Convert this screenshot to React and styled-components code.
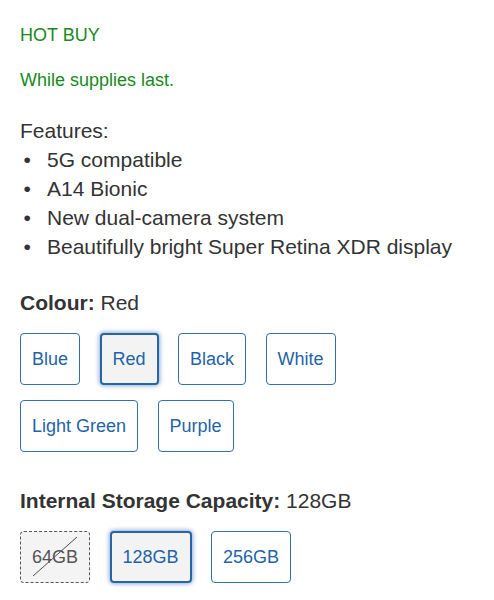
import React from "react";
import styled, { createGlobalStyle, css } from "styled-components";

const Global = createGlobalStyle`
  html, body { margin: 0; padding: 0; background: #fff; }
  body { font-family: "Liberation Sans", Arial, Helvetica, sans-serif; color: #333; }
`;

const Page = styled.div`
  padding: 22px 20px;
`;

const Promo = styled.div`
  font-size: 18px;
  line-height: 26px;
  color: #178a1c;
  margin-top: ${(p) => p.$gap || 0}px;
`;

const FeatureBlock = styled.div`
  margin-top: 23px;
  font-size: 21px;
  line-height: 29px;
  color: #333;
`;

const List = styled.ul`
  list-style: none;
  margin: 0;
  padding: 0;
`;

const Item = styled.li`
  display: flex;
`;

const Bullet = styled.span`
  width: 27px;
  padding-left: 3.5px;
  box-sizing: border-box;
  flex: none;
`;

const Label = styled.div`
  font-size: 21px;
  line-height: 29px;
  color: #333;
  margin-top: ${(p) => p.$gap}px;
  b { font-weight: 700; }
`;

const Options = styled.div`
  display: flex;
  flex-wrap: wrap;
  gap: 15px 19.5px;
  margin-top: 16px;
  max-width: 430px;
`;

const Option = styled.button`
  position: relative;
  box-sizing: border-box;
  height: 52px;
  padding: 0 11px;
  border-radius: 4px;
  font-family: "Liberation Sans", Arial, Helvetica, sans-serif;
  font-size: 18px;
  line-height: 26px;
  background: #fff;
  color: #1f63a8;
  border: 1px solid #3170b0;
  cursor: pointer;

  ${(p) =>
    p.$selected &&
    css`
      border: 2px solid #2765a6;
      background: #f3f3f3;
      box-shadow: 0 0 4px 1px rgba(45, 110, 180, 0.55);
    `}

  ${(p) =>
    p.$disabled &&
    css`
      border: 1px dashed #555;
      background: #f4f4f4;
      color: #555;
      &::after {
        content: "";
        position: absolute;
        left: 12px;
        right: 12px;
        top: 5px;
        bottom: 6px;
        background: linear-gradient(
          to bottom right,
          transparent calc(50% - 0.8px),
          #555 50%,
          transparent calc(50% + 0.8px)
        );
      }
    `}
`;

const features = [
  "5G compatible",
  "A14 Bionic",
  "New dual-camera system",
  "Beautifully bright Super Retina XDR display",
];

const colours = ["Blue", "Red", "Black", "White", "Light Green", "Purple"];
const storage = [
  { v: "64GB", disabled: true },
  { v: "128GB" },
  { v: "256GB" },
];

export default function App() {
  return (
    <>
      <Global />
      <Page>
        <Promo>HOT BUY</Promo>
        <Promo $gap={19}>While supplies last.</Promo>
        <FeatureBlock>
          Features:
          <List>
            {features.map((f) => (
              <Item key={f}>
                <Bullet>•</Bullet>
                {f}
              </Item>
            ))}
          </List>
        </FeatureBlock>
        <Label $gap={27}>
          <b>Colour:</b> Red
        </Label>
        <Options>
          {colours.map((c) => (
            <Option key={c} $selected={c === "Red"}>
              {c}
            </Option>
          ))}
        </Options>
        <Label $gap={34}>
          <b>Internal Storage Capacity:</b> 128GB
        </Label>
        <Options>
          {storage.map((s) => (
            <Option key={s.v} $selected={s.v === "128GB"} $disabled={s.disabled}>
              {s.v}
            </Option>
          ))}
        </Options>
      </Page>
    </>
  );
}
